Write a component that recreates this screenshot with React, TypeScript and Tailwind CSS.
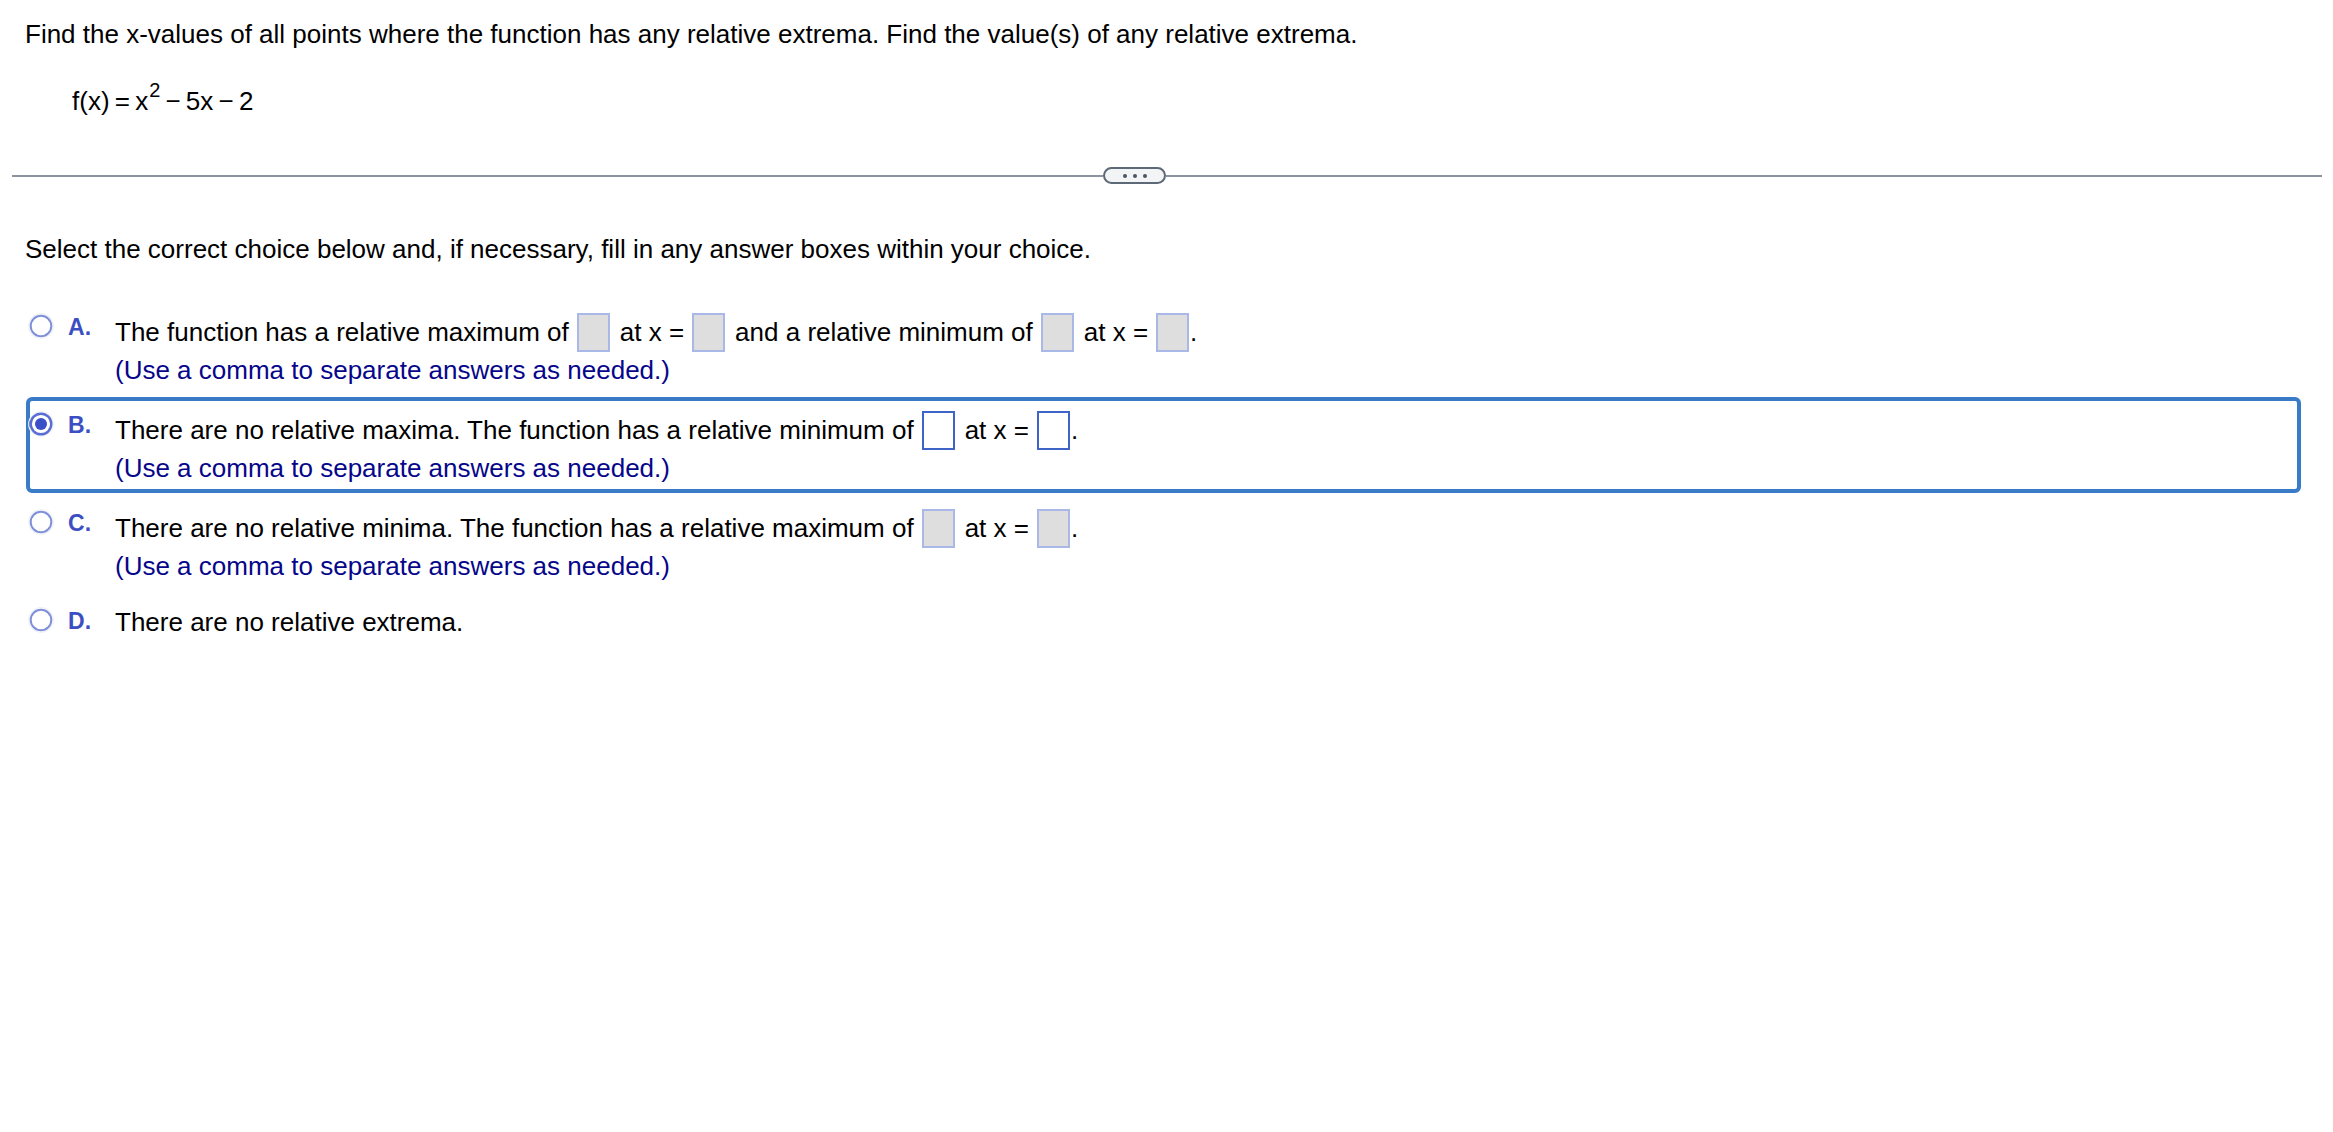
import React from "react";

type Choice = {
  id: string;
  text: (string | "box")[];
  hint?: boolean;
};

const choices: Choice[] = [
  {
    id: "A",
    text: [
      "The function has a relative maximum of",
      "box",
      "at x =",
      "box",
      "and a relative minimum of",
      "box",
      "at x =",
      "box",
      ".",
    ],
    hint: true,
  },
  {
    id: "B",
    text: [
      "There are no relative maxima. The function has a relative minimum of",
      "box",
      "at x =",
      "box",
      ".",
    ],
    hint: true,
  },
  {
    id: "C",
    text: [
      "There are no relative minima. The function has a relative maximum of",
      "box",
      "at x =",
      "box",
      ".",
    ],
    hint: true,
  },
  { id: "D", text: ["There are no relative extrema."] },
];

function Radio({ checked }: { checked: boolean }) {
  return (
    <svg width="26" height="26" viewBox="0 0 26 26" className="ml-[-2px] shrink-0">
      <circle cx="13" cy="13" r="12.3" fill="none" stroke="#f0f1f6" strokeWidth="1.2" />
      <circle
        cx="13"
        cy="13"
        r="10.3"
        fill="#fff"
        stroke={checked ? "#5a6dd2" : "#7f90d8"}
        strokeWidth={checked ? 2.4 : 2}
      />
      {checked && <circle cx="13" cy="13" r="6" fill="#3b4fc8" />}
    </svg>
  );
}

function AnswerBox({ active, tight }: { active: boolean; tight: boolean }) {
  return (
    <span
      className={
        "inline-block h-[39px] w-[33px] shrink-0 border-2 ml-[8px] " +
        (tight ? "mr-[1px] " : "mr-[10px] ") +
        (active ? "border-[#3f64c7] bg-white" : "border-[#a9b8e6] bg-[#dedede]")
      }
    />
  );
}

function ChoiceRow({ choice, selected }: { choice: Choice; selected: boolean }) {
  const hasBox = choice.text.includes("box");
  return (
    <div
      className={
        "h-[96px] rounded-[6px] border-4 pt-[10px] pb-[6px] " +
        (selected ? "border-[#3a7bc8]" : "border-transparent")
      }
    >
      <div className="flex items-start">
        <Radio checked={selected} />
        <span className="ml-[14px] mt-px w-[47px] shrink-0 text-[23px] font-bold leading-[26px] text-[#3c4fc2]">
          {choice.id}.
        </span>
        {choice.text.map((part, i) =>
          part === "box" ? (
            <AnswerBox key={i} active={selected} tight={choice.text[i + 1] === "."} />
          ) : (
            <span
              key={i}
              className={"whitespace-pre " + (hasBox ? "mt-[4px]" : "mt-0")}
            >
              {part}
            </span>
          )
        )}
      </div>
      {choice.hint && (
        <div className="mt-[3px] pl-[85px] text-[#06068a]">
          (Use a comma to separate answers as needed.)
        </div>
      )}
    </div>
  );
}

export default function App() {
  return (
    <div className="min-h-screen bg-white font-['Liberation_Sans',Arial,sans-serif] text-[26px] leading-[30px] text-black">
      <div className="pl-[25px] pt-[19px]">
        Find the x-values of all points where the function has any relative extrema. Find the
        value(s) of any relative extrema.
      </div>

      <div className="mt-[37px] pl-[72px] whitespace-pre">
        {"f(x)\u2009=\u2009x"}
        <sup className="relative top-[-13px] ml-px text-[20px]">2</sup>
        {"\u2009\u2212\u20095x\u2009\u2212\u20092"}
      </div>

      <div className="mt-[51px] flex h-[17px] items-center pl-[12px] pr-[11px]">
        <div className="h-[2px] w-[1091px] bg-[#8a94a1]" />
        <div className="flex h-[17px] w-[63px] shrink-0 items-center justify-center gap-[6px] rounded-full border-2 border-[#5e6978] bg-[#f3f4f6]">
          <span className="h-[4px] w-[4px] rounded-full bg-[#4b5563]" />
          <span className="h-[4px] w-[4px] rounded-full bg-[#4b5563]" />
          <span className="h-[4px] w-[4px] rounded-full bg-[#4b5563]" />
        </div>
        <div className="h-[2px] flex-1 bg-[#8a94a1]" />
      </div>

      <div className="mt-[50px] pl-[25px]">
        Select the correct choice below and, if necessary, fill in any answer boxes within your
        choice.
      </div>

      <div className="mt-[35px] ml-[26px] mr-[32px] flex flex-col gap-[2px]">
        {choices.map((c) => (
          <ChoiceRow key={c.id} choice={c} selected={c.id === "B"} />
        ))}
      </div>
    </div>
  );
}
